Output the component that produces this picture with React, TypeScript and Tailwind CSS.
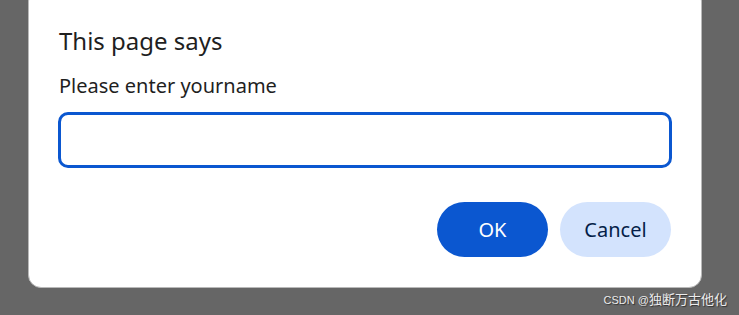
export default function App() {
  return (
    <div className="relative h-[315px] w-[739px] overflow-hidden bg-[#666666] font-['Noto_Sans','Open_Sans',sans-serif]">
      <div className="ml-[28px] mt-[-12px] w-[674px] rounded-[13px] border border-[#b9b9b9] bg-white pb-[30px] pl-[30px] pr-[30px] pt-[37px]">
        <h1 className="text-[24px] leading-[30px] text-[#1f1f1f]">This page says</h1>
        <p className="mt-[17px] text-[20px] leading-[26px] text-[#1f1f1f]">Please enter yourname</p>
        <input
          className="-ml-px mt-[13px] block h-[56px] w-[614px] rounded-[10px] border-[3px] border-[#0b57d0] px-3 text-[18px] outline-none"
          autoFocus
        />
        <div className="mt-[34px] flex justify-end gap-[12px]">
          <button className="h-[55px] w-[111px] rounded-full bg-[#0b57d0] text-[20px] text-white">OK</button>
          <button className="h-[55px] w-[111px] rounded-full bg-[#d3e3fd] text-[20px] text-[#041e49]">Cancel</button>
        </div>
      </div>
      <div className="absolute bottom-[7px] right-[12px] flex items-baseline leading-[16px] text-[#ececec] [text-shadow:1px_1px_1px_#333]">
        <span className="font-['Liberation_Sans',sans-serif] text-[11px]">CSDN @</span>
        <span className="font-['Noto_Sans_CJK_SC',sans-serif] text-[13px]">独断万古他化</span>
      </div>
    </div>
  );
}
